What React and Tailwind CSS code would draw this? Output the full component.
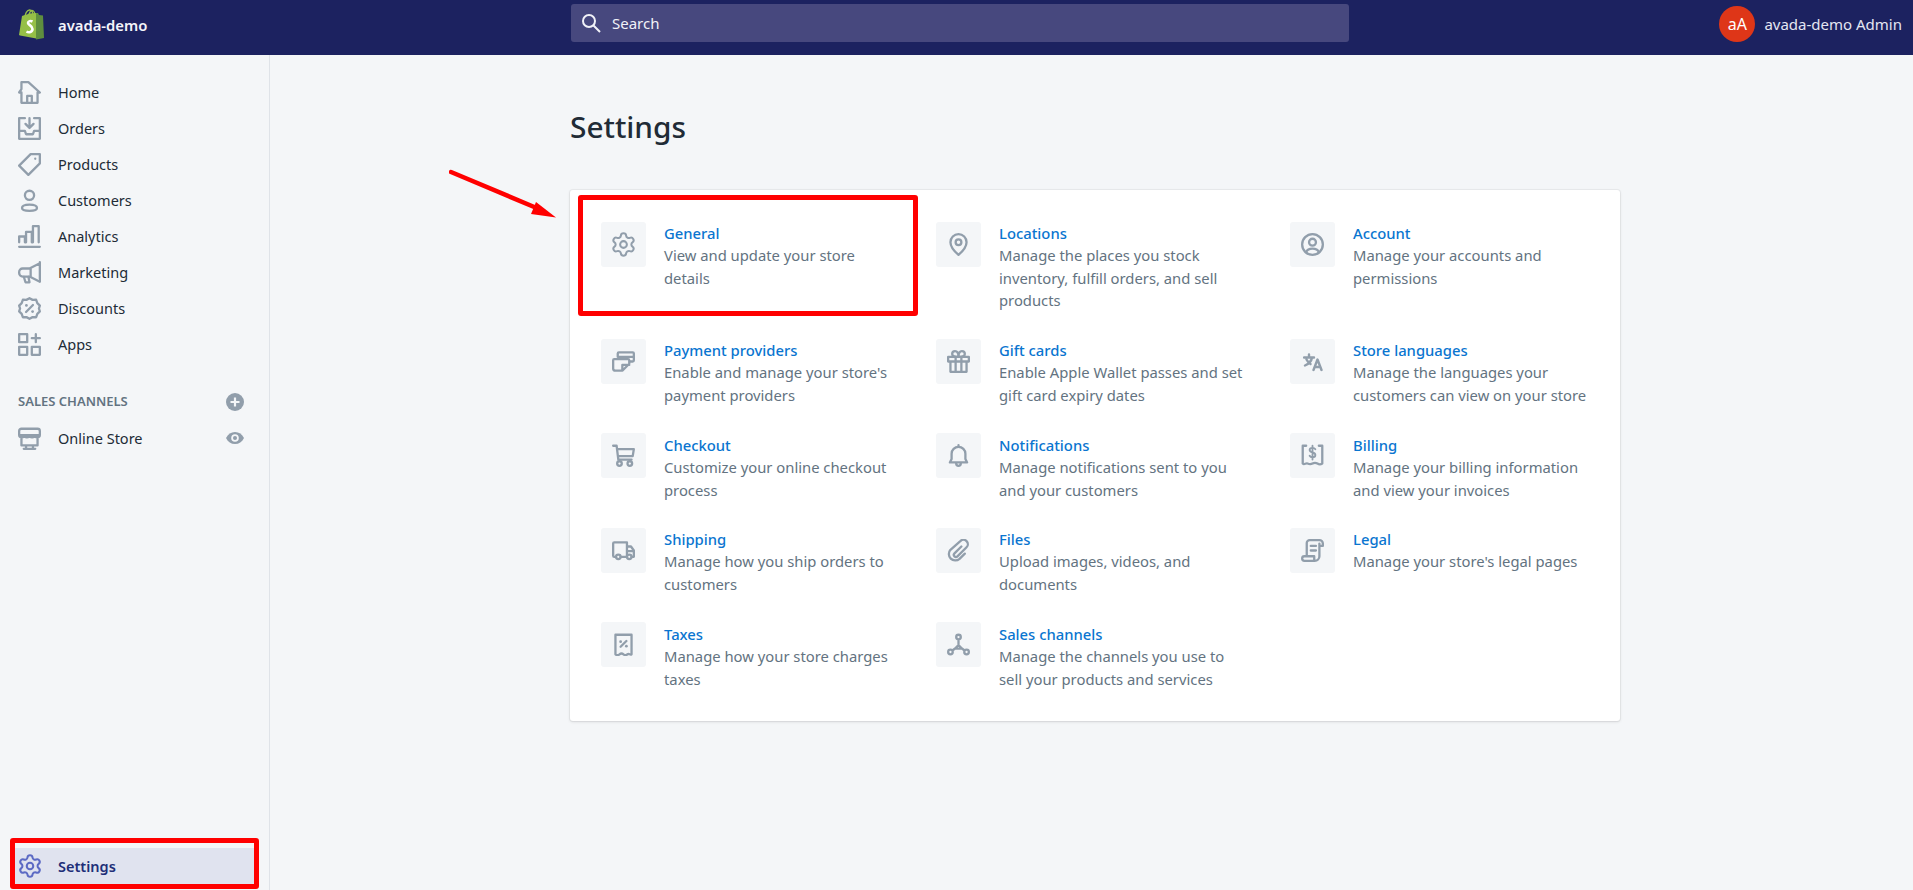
import React from "react";
import { Settings as Gear } from "lucide-react";

const I = ({ size = 23, children, className = "text-[#919eab]", sw = 2 }) => (
  <svg width={size} height={size} viewBox="0 0 20 20" fill="none" stroke="currentColor" strokeWidth={sw} strokeLinecap="round" strokeLinejoin="round" className={className}>
    {children}
  </svg>
);
const P = ({ d }) => <path d={d} />;
const dot = (x, y, r = 1) => <circle cx={x} cy={y} r={r} fill="currentColor" stroke="none" />;

const paths = {
  home: <P d="M3 19v-9H1l2-3V1h6l10 9h-2v9zM8 19v-6h4v6" />,
  orders: <P d="M6 1H1v18h18V1h-5M1 12h5l1 3h6l1-3h5M10 1v8M6.500 6l3.500 3.500L13.500 6" />,
  products: <><P d="M19 1h-8L1 11l8 8 10-10z" />{dot(15, 5)}</>,
  customers: <><circle cx="10" cy="5.500" r="4" /><P d="M3.500 16.500c0-2 2.800-3 6.500-3s6.500 1 6.500 3-2.800 2.500-6.500 2.500-6.500-.5-6.500-2.500z" /></>,
  analytics: <P d="M1 15v-5h5v5M7 15V6h5v9M13 15V1h5v14M1 19h18" />,
  marketing: <P d="M19 1v17M19 2l-9 4.500H4a3 3 0 0 0-3 3v1a3 3 0 0 0 3 3h6l9 4.500M5 13.500L6.500 18.500H10L9 13.500M11 6.500v7" />,
  discounts: <><P d="M10 1l2.700 1.500 3.100-.1 1 2.900 2.200 2.200L18.200 10 19 12.500l-2.200 2.200-1 2.900-3.100-.1L10 19l-2.700-1.500-3.100.1-1-2.900L1 12.500 1.800 10 1 7.500l2.200-2.200 1-2.900 3.100.1z" /><P d="M7 13l6-6" />{dot(7.300, 7.300, 1.200)}{dot(12.700, 12.700, 1.200)}</>,
  apps: <P d="M1 1h7v7H1zM1 12h7v7H1zM12 12h7v7h-7zM15.500 1v7M12 4.500h7" />,
  store: <P d="M3 1.500h14a2 2 0 0 1 2 2V7H1V3.500a2 2 0 0 1 2-2zM1 7c0 2.600 4.500 2.600 4.500 0 0 2.600 4.500 2.600 4.500 0 0 2.600 4.500 2.600 4.500 0 0 2.600 4.500 2.600 4.500 0M3 10v6h14v-6M7 16v3M13 16v3M5 19h10" />,
  payment: <P d="M5 6V3a1 1 0 0 1 1-1h12a1 1 0 0 1 1 1v6a1 1 0 0 1-1 1h-3M5 6h14M2 8h12a1 1 0 0 1 1 1v3l-6 6H3a2 2 0 0 1-2-2V9a1 1 0 0 1 1-1zM9 18v-5h6" />,
  location: <><P d="M10 19s-7-6-7-11a7 7 0 0 1 14 0c0 5-7 11-7 11z" /><circle cx="10" cy="8" r="2.500" /></>,
  account: <><circle cx="10" cy="10" r="9" /><circle cx="10" cy="8" r="3" /><P d="M4.500 16.500c1-2.500 3-3 5.500-3s4.500.5 5.500 3" /></>,
  gift: <P d="M1 6h18v4H1zM3 10v9h14v-9M7.500 6v13M12.500 6v13M10 6C7 6 4.500 5.500 4.500 3.500 4.500 2 5.500 1 7 1c2 0 3 2 3 5zM10 6c3 0 5.500-.5 5.500-2.500C15.500 2 14.500 1 13 1c-2 0-3 2-3 5z" />,
  lang: <P d="M1 5.500h10M6 2.500v3M9 5.500C8.500 9 5.500 12 2 13.500M3.500 7.500c1 2 2.500 3.500 4 4.500M10.500 18l4-10.500 4 10.500M12 15h5" />,
  cart: <><P d="M1 1.500h3l1.500 12H17M4.500 4.500H19l-1 6H5.500" /><circle cx="6.500" cy="17" r="2" /><circle cx="15.500" cy="17" r="2" /></>,
  bell: <P d="M10 1v1.500M10 2.500a6 6 0 0 0-6 6V13l-1.500 3h15L16 13V8.500a6 6 0 0 0-6-6zM8 17a2 2 0 0 0 4 0" />,
  billing: <><P d="M4.500 1.500h-3v15.500c1.500 1.500 2.500-.8 4.200 0s2.600 1 4.300 0 2.600-1 4.300 0 2.700 1 4.200 0V1.500h-3" /><path strokeWidth="1.600" d="M12.500 4.500C12 3.700 11 3.300 10 3.300c-1.500 0-2.500.8-2.500 2s1 1.700 2.500 2.100 2.500 1 2.500 2.100-1 2-2.500 2c-1 0-2-.4-2.500-1.300M10 1.500v12" /></>,
  truck: <><P d="M3.500 15.500H2a1 1 0 0 1-1-1V4a1 1 0 0 1 1-1h11v12.500H7.500M13 6.500h3.500l2.500 3.500v5.500h-2M13 10.500h6" /><circle cx="5.500" cy="15.500" r="2" /><circle cx="15" cy="15.500" r="2" /></>,
  clip: <P d="M12.500 6.500L6.500 12.500a1.800 1.800 0 0 0 2.600 2.600l7.900-7.900a3.800 3.800 0 0 0-5.400-5.400L3 9.400a5.600 5.600 0 0 0 7.900 7.900l4.600-4.600" />,
  legal: <P d="M5 15V3.500A2.500 2.500 0 0 1 7.500 1H16a3 3 0 0 1 3 3v2h-3M16 4v11a4 4 0 0 1-4 4H3a2 2 0 0 1-2-2 2 2 0 0 1 2-2h8.500v4M8.500 6H13M8.500 10H13" />,
  tax: <><P d="M3 1.500h14v17c-1.200 1-2.200-1-3.500 0s-2.300 1-3.500 0-2.300-1-3.500 0-2.300 1-3.500 0zM7.500 12l5-5" />{dot(7.500, 7.500, 1.200)}{dot(12.500, 11.500, 1.200)}</>,
  channels: <P d="M10 1.500a2 2 0 1 1 0 4 2 2 0 0 1 0-4zM3 14.500a2 2 0 1 1 0 4 2 2 0 0 1 0-4zM17 14.500a2 2 0 1 1 0 4 2 2 0 0 1 0-4zM10 5.500v5M10 10.500l-3 3h6zM5 15l2-1.500M15 15l-2-1.500" />,
};

const nav = [
  ["Home", "home"], ["Orders", "orders"], ["Products", "products"], ["Customers", "customers"],
  ["Analytics", "analytics"], ["Marketing", "marketing"], ["Discounts", "discounts"], ["Apps", "apps"],
];

const items = [
  ["General", "View and update your store\ndetails", "gear"],
  ["Locations", "Manage the places you stock\ninventory, fulfill orders, and sell\nproducts", "location"],
  ["Account", "Manage your accounts and\npermissions", "account"],
  ["Payment providers", "Enable and manage your store's\npayment providers", "payment"],
  ["Gift cards", "Enable Apple Wallet passes and set\ngift card expiry dates", "gift"],
  ["Store languages", "Manage the languages your\ncustomers can view on your store", "lang"],
  ["Checkout", "Customize your online checkout\nprocess", "cart", 1],
  ["Notifications", "Manage notifications sent to you\nand your customers", "bell", 1],
  ["Billing", "Manage your billing information\nand view your invoices", "billing", 1],
  ["Shipping", "Manage how you ship orders to\ncustomers", "truck"],
  ["Files", "Upload images, videos, and\ndocuments", "clip"],
  ["Legal", "Manage your store's legal pages", "legal"],
  ["Taxes", "Manage how your store charges\ntaxes", "tax", 1],
  ["Sales channels", "Manage the channels you use to\nsell your products and services", "channels", 1],
];

const Logo = () => (
  <svg width="28" height="32" viewBox="0 0 28 32">
    <path d="M2 27L5 8c3-1 5-1.500 7-2.500L20 5l2 26-19-3.500z" fill="#95bf47" />
    <path d="M19 5l2 0 1 2 4 .5L27 30l-8 1.500z" fill="#5e8e3e" />
    <path d="M8 9c0-3 2-7 4.500-7S16 5 16 8M12 8c0-3 1.500-5.500 3-5.500s3 2 3 5" fill="none" stroke="#95bf47" strokeWidth="1.300" />
    <path d="M15.500 13.500c-2-1-4.500-.5-4.500 1.500s4.500 2.500 4.500 6c0 3-3.500 4-6 2.500" fill="none" stroke="#fff" strokeWidth="2.600" />
  </svg>
);

export default function App() {
  return (
    <div className="flex min-h-screen flex-col bg-[#f4f6f8] font-['Noto_Sans',sans-serif] text-[14.5px] text-[#212b36]">
      <header className="flex h-[55px] shrink-0 items-center bg-[#1c2260] pb-[7px]">
        <div className="flex w-[571px] items-center pl-[17px]">
          <Logo />
          <span className="ml-[13px] mt-[2px] text-[14.800px] font-semibold text-[#f4f5fa]">avada-demo</span>
        </div>
        <div className="-mt-[2px] flex h-[38px] w-[778px] items-center rounded-[3px] bg-[#47487e] pl-[10px] text-[15px] text-[#f1f2f8]">
          <svg width="20" height="20" viewBox="0 0 20 20" fill="none" stroke="currentColor" strokeWidth="2"><circle cx="8" cy="8" r="6" /><path d="M12.500 12.500L19 19" /></svg>
          <span className="ml-[11px]">Search</span>
        </div>
        <div className="flex flex-1 items-center justify-end pr-[11px]">
          <div className="flex h-[36px] w-[36px] items-center justify-center rounded-full bg-[#de3618] text-[16px] text-white">aA</div>
          <span className="ml-[9px] text-[15px] text-[#e4e6f2]">avada-demo Admin</span>
        </div>
      </header>
      <div className="flex flex-1">
        <aside className="flex w-[270px] shrink-0 flex-col justify-between border-r border-[#dfe3e8] pb-px">
          <div className="pt-[19px]">
            {nav.map(([t, k]) => (
              <div key={t} className="flex h-[36px] items-center pl-[18px]">
                <span className="flex w-[40px] shrink-0"><I>{paths[k]}</I></span>
                <span className="pt-px">{t}</span>
              </div>
            ))}
            <div className="mt-[21px] flex h-[37px] items-center justify-between pl-[18px] pr-[25px]">
              <span className="pt-px text-[13px] font-semibold text-[#637381]">SALES CHANNELS</span>
              <svg width="18" height="18" viewBox="0 0 18 18"><circle cx="9" cy="9" r="9" fill="#919eab" /><path d="M9 4.500v9M4.500 9h9" stroke="#f4f6f8" strokeWidth="2.200" /></svg>
            </div>
            <div className="flex h-[36px] items-center pl-[18px] pr-[25px]">
              <span className="flex w-[40px] shrink-0"><I>{paths.store}</I></span>
              <span className="flex-1 pt-px">Online Store</span>
              <svg width="18" height="18" viewBox="0 0 18 18"><path d="M0 9c2-4 5-6 9-6s7 2 9 6c-2 4-5 6-9 6s-7-2-9-6z" fill="#919eab" /><circle cx="9" cy="9" r="3.800" fill="#f4f6f8" /><circle cx="9" cy="9" r="2" fill="#919eab" /></svg>
            </div>
          </div>
          <div className="mx-[10px] rounded-[3px] border-[5px] border-[#ff0000] pt-[5px]">
            <div className="flex h-[36px] items-center bg-[#e0e3ef] pl-[2px]">
              <span className="flex w-[41px] shrink-0"><Gear size={26} strokeWidth={1.900} className="text-[#5c6ac4]" /></span>
              <span className="pt-px font-semibold text-[#202e78]">Settings</span>
            </div>
          </div>
        </aside>
        <main className="relative flex-1 pl-[300px] pt-[52px]">
          <h1 className="h-[83px] text-[29.800px] font-medium leading-[40px]">Settings</h1>
          <svg className="absolute left-[179px] top-[114px]" width="112" height="54" viewBox="0 0 112 54">
            <path d="M2 3L90 40" stroke="#ff0000" strokeWidth="4.500" strokeLinecap="round" />
            <path d="M87 33L107 48.500 82 45z" fill="#ff0000" />
          </svg>
          <section className="relative h-[531px] w-[1050px] rounded-[3px] bg-white pl-[31px] pt-[32px] shadow-[0_0_0_1px_rgba(63,63,68,0.05),0_1px_3px_0_rgba(63,63,68,0.15)]">
            <div className="grid grid-cols-[335px_354px_1fr] grid-rows-[117px_94px_95px_94px_auto]">
              {items.map(([t, d, k, low]) => (
                <div key={t} className="flex gap-[18px]">
                  <div className="flex h-[45px] w-[45px] shrink-0 items-center justify-center rounded-[3px] bg-[#f4f6f8]">
                    {k === "gear" ? <Gear size={27} strokeWidth={1.800} className="text-[#919eab]" /> : <I size={k === "lang" ? 20 : 23} sw={k === "lang" ? 2.400 : 2}>{paths[k]}</I>}
                  </div>
                  <div className={low ? "mt-px" : ""}>
                    <div className="text-[14.800px] font-medium leading-[22px] text-[#0a75d0]">{t}</div>
                    <div className="whitespace-pre-line text-[14.800px] leading-[22.500px] text-[#637381]">{d}</div>
                  </div>
                </div>
              ))}
            </div>
            <div className="absolute left-[8px] top-[5px] h-[121px] w-[340px] rounded-[3px] border-[5px] border-[#ff0000]" />
          </section>
        </main>
      </div>
    </div>
  );
}
